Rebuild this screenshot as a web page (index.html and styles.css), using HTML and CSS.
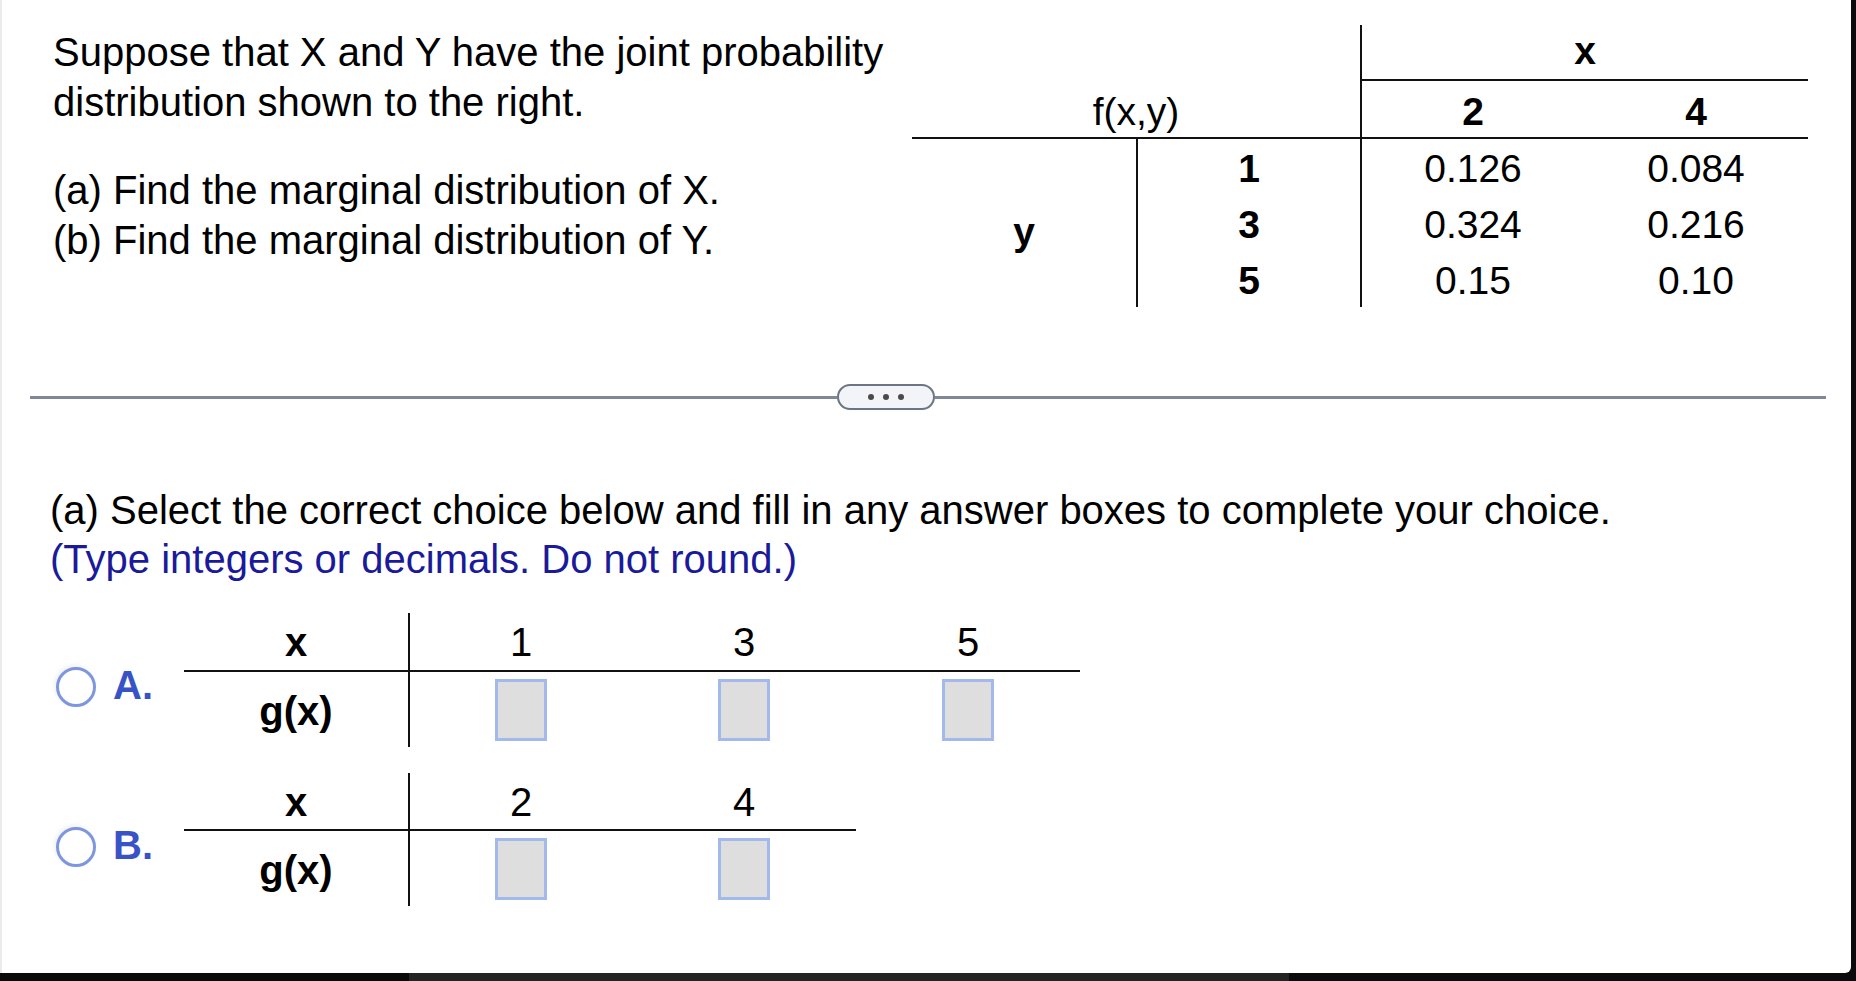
FILE: index.html
```html
<!DOCTYPE html>
<html lang="en">
<head>
<meta charset="utf-8">
<title>Joint probability distribution</title>
<link rel="stylesheet" href="styles.css">
</head>
<body>
<div class="screen">
  <div class="window">
    <section class="problem">
      <div class="prompt">
        <p>Suppose that X and Y have the joint probability<br>distribution shown to the right.</p>
        <p>(a) Find the marginal distribution of X.<br>(b) Find the marginal distribution of Y.</p>
      </div>
      <div class="joint">
        <div class="fxy">f(x,y)</div>
        <div class="xhead">x</div>
        <div class="xval c3">2</div>
        <div class="xval c4">4</div>
        <div class="yhead">y</div>
        <div class="yval r3">1</div>
        <div class="val c3 r3">0.126</div>
        <div class="val c4 r3">0.084</div>
        <div class="yval r4">3</div>
        <div class="val c3 r4">0.324</div>
        <div class="val c4 r4">0.216</div>
        <div class="yval r5">5</div>
        <div class="val c3 r5">0.15</div>
        <div class="val c4 r5">0.10</div>
      </div>
    </section>

    <div class="divider">
      <span class="rule rule-left"></span>
      <span class="pill"><i class="dot"></i><i class="dot"></i><i class="dot"></i></span>
      <span class="rule rule-right"></span>
    </div>

    <section class="answer">
      <p class="instr">(a) Select the correct choice below and fill in any answer boxes to complete your choice.</p>
      <p class="hint">(Type integers or decimals. Do not round.)</p>

      <div class="option">
        <span class="radio"></span>
        <span class="letter">A.</span>
        <div class="gtable four">
          <div class="gh key">x</div>
          <div class="gh num first">1</div>
          <div class="gh num">3</div>
          <div class="gh num">5</div>
          <div class="gv key">g(x)</div>
          <div class="gv box first"><span class="inbox"></span></div>
          <div class="gv box"><span class="inbox"></span></div>
          <div class="gv box"><span class="inbox"></span></div>
        </div>
      </div>

      <div class="option option-b">
        <span class="radio"></span>
        <span class="letter">B.</span>
        <div class="gtable three">
          <div class="gh key">x</div>
          <div class="gh num first">2</div>
          <div class="gh num">4</div>
          <div class="gv key">g(x)</div>
          <div class="gv box first"><span class="inbox"></span></div>
          <div class="gv box"><span class="inbox"></span></div>
        </div>
      </div>
    </section>
  </div>
  <div class="taskbar">
    <span class="seg seg-a"></span>
    <span class="seg seg-b"></span>
    <span class="seg seg-c"></span>
  </div>
</div>
</body>
</html>
```

FILE: styles.css
```css
* { box-sizing: border-box; }

html, body {
  margin: 0;
  padding: 0;
  background: #0b0b0d;
}

body {
  font-family: "Liberation Sans", Arial, Helvetica, sans-serif;
  color: #000;
}

.screen {
  width: 1856px;
  height: 981px;
  display: flex;
  flex-direction: column;
  overflow: hidden;
}

.window {
  width: 1851px;
  height: 973px;
  background: #fff;
  border-left: 2px solid #ebebee;
  border-bottom-right-radius: 6px;
  overflow: hidden;
}

/* ---------- top problem ---------- */
.problem {
  display: flex;
  padding: 25px 0 0 51px;
}

.prompt {
  width: 859px;
  padding-top: 2px;
  font-size: 40px;
  line-height: 50px;
}

.prompt p { margin: 0; }
.prompt p + p { margin-top: 38px; }

.joint {
  display: grid;
  grid-template-columns: repeat(4, 224px);
  grid-template-rows: 56px 58px 56px 56px 56px;
  font-size: 39px;
  text-align: center;
}

.fxy {
  grid-column: 1 / 3;
  grid-row: 2;
  border-bottom: 2px solid #111;
  line-height: 62px;
}

.xhead {
  grid-column: 3 / 5;
  grid-row: 1;
  border-left: 2px solid #111;
  border-bottom: 2px solid #111;
  font-weight: bold;
  line-height: 52px;
}

.xval {
  grid-row: 2;
  border-bottom: 2px solid #111;
  font-weight: bold;
  line-height: 62px;
}

.yhead {
  grid-column: 1;
  grid-row: 4;
  padding-top: 7px;
  font-weight: bold;
  line-height: 60px;
}

.yval {
  grid-column: 2;
  border-left: 2px solid #111;
  font-weight: bold;
  line-height: 60px;
}

.val { line-height: 60px; }

.c3 { grid-column: 3; border-left: 2px solid #111; }
.c4 { grid-column: 4; }
.r3 { grid-row: 3; }
.r4 { grid-row: 4; }
.r5 { grid-row: 5; }

/* ---------- divider ---------- */
.divider {
  display: flex;
  align-items: center;
  height: 26px;
  margin: 77px 25px 0 28px;
}

.rule {
  height: 3px;
  background: #7f8898;
}

.rule-left { width: 807px; }
.rule-right { flex: 1; }

.pill {
  width: 98px;
  height: 26px;
  border: 2px solid #6c7586;
  border-radius: 13px;
  background: #f2f4f7;
  display: flex;
  align-items: center;
  justify-content: center;
  gap: 9px;
}

.dot {
  width: 6px;
  height: 6px;
  border-radius: 50%;
  background: #4a4a4a;
}

/* ---------- answer ---------- */
.answer {
  padding-left: 48px;
}

.instr, .hint {
  margin: 0;
  font-size: 40px;
  line-height: 49px;
}

.instr { margin-top: 76px; }
.hint { color: #1a1a9a; }

.option {
  display: flex;
  align-items: flex-start;
  margin-top: 29px;
  margin-left: 6px;
}

.option-b { margin-top: 26px; }

.radio {
  width: 40px;
  height: 40px;
  margin-top: 54px;
  border: 3px solid #7d96df;
  border-radius: 50%;
  box-shadow: -2px -2px 4px rgba(0, 0, 0, 0.06);
}

.letter {
  width: 71px;
  margin-left: 17px;
  margin-top: 52px;
  font-size: 40px;
  line-height: 40px;
  font-weight: bold;
  color: #3853c6;
}

.gtable {
  display: grid;
  grid-template-rows: 59px 75px;
  font-size: 40px;
  text-align: center;
}

.gtable.four { grid-template-columns: repeat(4, 224px); }
.gtable.three { grid-template-columns: repeat(3, 224px); grid-template-rows: 58px 75px; }

.gh {
  border-bottom: 2px solid #111;
  line-height: 58px;
}

.gv { line-height: 78px; }

.key { font-weight: bold; }

.first { border-left: 2px solid #111; }

.box {
  display: flex;
  align-items: center;
  justify-content: center;
}

.inbox {
  width: 52px;
  height: 62px;
  border: 3px solid #a3b9ec;
  background: #dedede;
}

/* ---------- bottom bar ---------- */
.taskbar {
  height: 8px;
  display: flex;
}

.seg-a { width: 409px; background: #0a0a0a; }
.seg-b { width: 880px; background: #232323; }
.seg-c { flex: 1; background: #0b0b0d; }
```
